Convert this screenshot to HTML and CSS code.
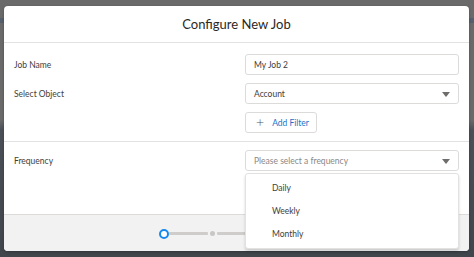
FILE: index.html
```html
<!DOCTYPE html>
<html>
<head>
<meta charset="utf-8">
<link rel="stylesheet" href="styles.css">
</head>
<body>
<div class="modal">
  <div class="header"><h1 class="title">Configure New Job</h1></div>
  <div class="body">
    <div class="section">
      <div class="row">
        <label class="label">Job Name</label>
        <div class="field">My Job 2</div>
      </div>
      <div class="row">
        <label class="label">Select Object</label>
        <div class="field select">Account<span class="caret"></span></div>
      </div>
      <div class="row">
        <span></span>
        <div><button class="btn"><span class="plus">+</span>Add Filter</button></div>
      </div>
    </div>
    <div class="section second">
      <div class="row">
        <label class="label">Frequency</label>
        <div class="combo">
          <div class="field select placeholder">Please select a frequency<span class="caret"></span></div>
          <ul class="menu">
            <li>Daily</li>
            <li>Weekly</li>
            <li>Monthly</li>
          </ul>
        </div>
      </div>
    </div>
  </div>
  <div class="footer">
    <div class="progress">
      <span class="step active"></span><span class="bar"></span>
      <span class="step"></span><span class="bar"></span>
      <span class="step"></span><span class="bar"></span>
      <span class="step"></span>
    </div>
  </div>
</div>
</body>
</html>
```
FILE: styles.css
```css
* { box-sizing: border-box; }
html, body { margin: 0; height: 100%; }
body {
  width: 474px;
  height: 257px;
  overflow: hidden;
  padding: 6px 5px 6px 4px;
  font-family: Lato, "Open Sans", sans-serif;
  color: #3e3e3c;
  background:
    linear-gradient(to bottom, transparent 0, transparent 18px, #56606c 18px, #56606c 23px, transparent 23px),
    linear-gradient(to bottom, #6a6a6a 0, #6a6a6a 120px, #4b5058 130px, #41464d 100%);
}
.modal {
  height: 245px;
  background: #fff;
  border-radius: 4px;
  display: flex;
  flex-direction: column;
  box-shadow: 0 1px 3px rgba(0,0,0,0.25);
  position: relative;
}
.header {
  height: 37px;
  border-bottom: 1px solid #e2e2e2;
  display: flex;
  align-items: center;
  justify-content: center;
}
.title {
  margin: 0;
  font-size: 13px;
  font-weight: 400;
  color: #2b2826;
}
.body { flex: 1; }
.section { padding: 11px 10px 8px 10px; display: flex; flex-direction: column; gap: 8px; }
.second { border-top: 1px solid #e2e2e2; padding-top: 8px; }
.row {
  display: grid;
  grid-template-columns: 1fr 214px;
  align-items: center;
}
.label { font-size: 8.5px; color: #3e3e3c; padding-top: 1px; }
.field {
  height: 21px;
  border: 1px solid #dddbda;
  border-radius: 3px;
  padding: 0 8px;
  display: flex;
  align-items: center;
  font-size: 8.5px;
  color: #3e3e3c;
  position: relative;
}
.placeholder { color: #8a8886; }
.caret {
  position: absolute;
  right: 8px;
  top: 8px;
  width: 0; height: 0;
  border-left: 4.5px solid transparent;
  border-right: 4.5px solid transparent;
  border-top: 5px solid #6f6d6b;
}
.btn {
  height: 21px;
  width: 72px;
  border: 1px solid #dddbda;
  border-radius: 3px;
  background: #fff;
  font-family: inherit;
  font-size: 8.5px;
  color: #1b72c7;
  display: flex;
  align-items: center;
  padding: 0 0 0 10px;
  gap: 8px;
}
.plus { color: #555; font-size: 14px; font-weight: 300; line-height: 1; margin-top: -1px; }
.combo { position: relative; }
.menu {
  position: absolute;
  left: 0; right: 0;
  top: 23px;
  margin: 0;
  list-style: none;
  background: #fff;
  border: 1px solid #e4e2e1;
  border-radius: 3px;
  box-shadow: 0 2px 3px rgba(0,0,0,0.16);
  padding: 2px 0 3px 0;
  z-index: 5;
}
.menu li {
  height: 23px;
  display: flex;
  align-items: center;
  padding-left: 26px;
  font-size: 8.5px;
  color: #3e3e3c;
}
.footer {
  height: 37px;
  background: #f3f2f2;
  border-top: 1px solid #dddbda;
  border-radius: 0 0 4px 4px;
  display: flex;
  align-items: center;
  justify-content: center;
  padding-top: 1px;
}
.progress { display: flex; align-items: center; margin-left: -2px; }
.step {
  width: 5px; height: 5px;
  border-radius: 50%;
  background: #c9c7c5;
  margin: 0 2px;
}
.step.active {
  width: 10px; height: 10px;
  background: #fff;
  border: 2.5px solid #1589ee;
  margin: 0;
}
.bar { width: 39px; height: 3px; background: #cfcdcb; border-radius: 1px; }
```
